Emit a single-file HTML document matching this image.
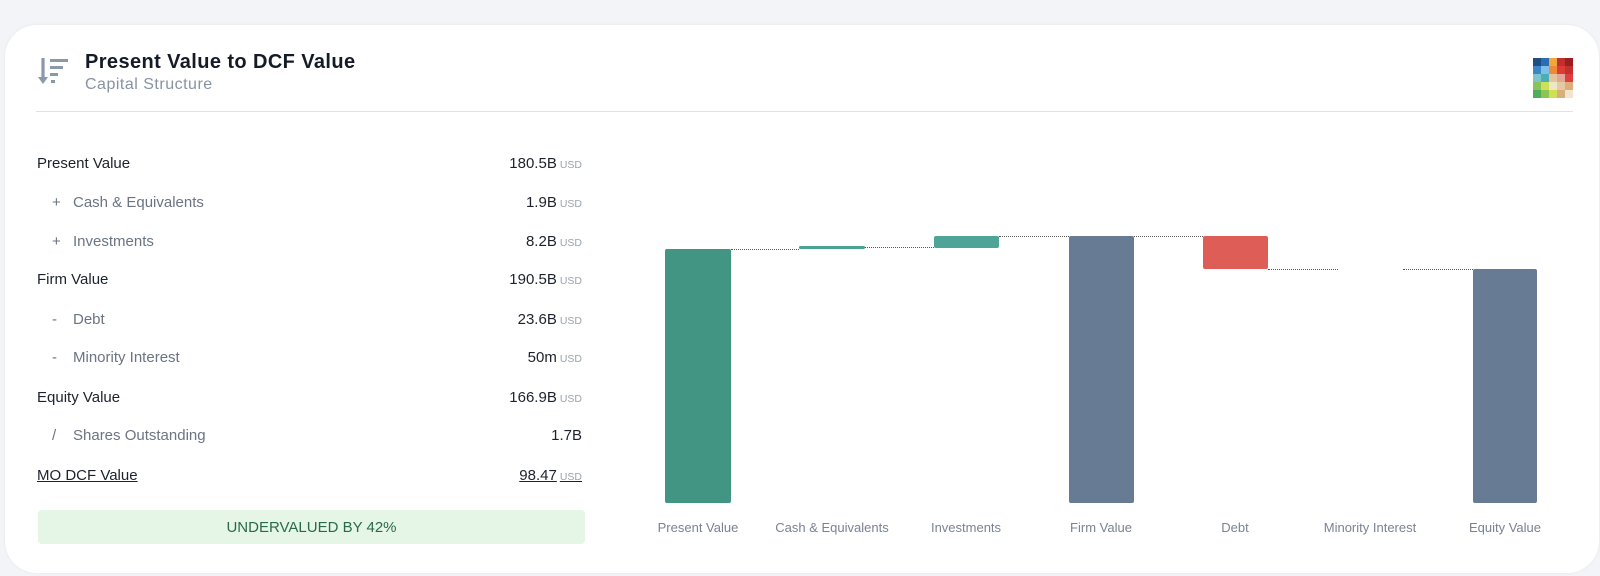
<!DOCTYPE html>
<html><head><meta charset="utf-8"><style>
*{margin:0;padding:0;box-sizing:border-box}
body{width:1600px;height:576px;background:#f3f4f8;font-family:"Liberation Sans",sans-serif;position:relative;overflow:hidden}
.card{position:absolute;left:5px;top:25px;width:1594px;height:548px;background:#fff;border-radius:32px;box-shadow:0 0 3px rgba(0,0,0,.06)}
.abs{position:absolute}
.title{left:85px;top:51px;font-size:20px;font-weight:bold;color:#141a26;letter-spacing:.4px}
.sub{left:85px;top:76px;font-size:16px;color:#8792a4;letter-spacing:.5px}
.sep{left:36px;top:111px;width:1537px;height:1px;background:#dfe2e6}
.row{position:absolute;left:37px;width:545px;height:20px;font-size:15px;color:#1c222c;line-height:20px}
.row .v{position:absolute;right:0;top:0}
.row .u{font-size:10.5px;color:#9aa3ae;margin-left:3px}
.row.s{color:#6b7482}
.row.s .l{padding-left:15px}
.row.s .l b{font-weight:normal;display:inline-block;width:21px}
.btn{left:38px;top:510px;width:547px;height:34px;background:#e5f6e6;border-radius:4px;color:#2a6a4a;font-size:15px;text-align:center;line-height:36px}
.bar{position:absolute;border-radius:2px}
.dot{position:absolute;height:0;border-top:1.5px dotted #555}
.lab{position:absolute;top:520px;width:160px;text-align:center;font-size:13px;color:#7a8392}
</style></head><body>
<div class="card"></div>
<svg class="abs" style="left:38px;top:56px" width="32" height="32" viewBox="0 0 32 32">
<path d="M5 2v22" stroke="#8a98ab" stroke-width="3.2"/>
<path d="M0 21l5 7 5-7z" fill="#8a98ab"/>
<rect x="12" y="3" width="18" height="3" fill="#8a98ab"/>
<rect x="12" y="10" width="13" height="3" fill="#8a98ab"/>
<rect x="12" y="17" width="8" height="3" fill="#8a98ab"/>
<rect x="13" y="24" width="4" height="3" fill="#8a98ab"/>
</svg>
<div class="abs title">Present Value to DCF Value</div>
<div class="abs sub">Capital Structure</div>
<div class="abs sep"></div>
<svg class="abs" style="left:1533px;top:58px" width="40" height="40" viewBox="0 0 40 40">
<rect x="0" y="0" width="8" height="8" fill="#1f4e85"/><rect x="8" y="0" width="8" height="8" fill="#2a6db3"/><rect x="16" y="0" width="8" height="8" fill="#f0a73c"/><rect x="24" y="0" width="8" height="8" fill="#c03030"/><rect x="32" y="0" width="8" height="8" fill="#9b1f1f"/>
<rect x="0" y="8" width="8" height="8" fill="#3a86c6"/><rect x="8" y="8" width="8" height="8" fill="#7cbfe8"/><rect x="16" y="8" width="8" height="8" fill="#ec8a3a"/><rect x="24" y="8" width="8" height="8" fill="#e03a35"/><rect x="32" y="8" width="8" height="8" fill="#c2302f"/>
<rect x="0" y="16" width="8" height="8" fill="#7cc5cf"/><rect x="8" y="16" width="8" height="8" fill="#4aaeb6"/><rect x="16" y="16" width="8" height="8" fill="#e3c49c"/><rect x="24" y="16" width="8" height="8" fill="#e3a596"/><rect x="32" y="16" width="8" height="8" fill="#e23d3d"/>
<rect x="0" y="24" width="8" height="8" fill="#8cc25a"/><rect x="8" y="24" width="8" height="8" fill="#cde05a"/><rect x="16" y="24" width="8" height="8" fill="#efe6c4"/><rect x="24" y="24" width="8" height="8" fill="#e6c8a2"/><rect x="32" y="24" width="8" height="8" fill="#dcae7c"/>
<rect x="0" y="32" width="8" height="8" fill="#4fae5a"/><rect x="8" y="32" width="8" height="8" fill="#8ec454"/><rect x="16" y="32" width="8" height="8" fill="#cfe052"/><rect x="24" y="32" width="8" height="8" fill="#d8ae7c"/><rect x="32" y="32" width="8" height="8" fill="#f1e5cc"/>
</svg>

<div class="row" style="top:154px"><span class="l">Present Value</span><span class="v">180.5B<span class="u">USD</span></span></div>
<div class="row s" style="top:193px"><span class="l"><b>+</b>Cash &amp; Equivalents</span><span class="v" style="color:#1c222c">1.9B<span class="u">USD</span></span></div>
<div class="row s" style="top:232px"><span class="l"><b>+</b>Investments</span><span class="v" style="color:#1c222c">8.2B<span class="u">USD</span></span></div>
<div class="row" style="top:270px"><span class="l">Firm Value</span><span class="v">190.5B<span class="u">USD</span></span></div>
<div class="row s" style="top:310px"><span class="l"><b>-</b>Debt</span><span class="v" style="color:#1c222c">23.6B<span class="u">USD</span></span></div>
<div class="row s" style="top:348px"><span class="l"><b>-</b>Minority Interest</span><span class="v" style="color:#1c222c">50m<span class="u">USD</span></span></div>
<div class="row" style="top:388px"><span class="l">Equity Value</span><span class="v">166.9B<span class="u">USD</span></span></div>
<div class="row s" style="top:426px"><span class="l"><b>/</b>Shares Outstanding</span><span class="v" style="color:#1c222c">1.7B</span></div>
<div class="row" style="top:466px"><span class="l" style="text-decoration:underline">MO DCF Value</span><span class="v" style="text-decoration:underline">98.47<span class="u">USD</span></span></div>
<div class="abs btn">UNDERVALUED BY 42%</div>

<div class="bar" style="left:665px;top:249px;width:66px;height:254px;background:#439583"></div>
<div class="bar" style="left:799px;top:246px;width:66px;height:3px;background:#4aa292"></div>
<div class="bar" style="left:934px;top:236px;width:65px;height:12px;background:#4ea597"></div>
<div class="bar" style="left:1069px;top:236px;width:65px;height:267px;background:#677c94"></div>
<div class="bar" style="left:1203px;top:236px;width:65px;height:33px;background:#df5d57"></div>
<div class="bar" style="left:1473px;top:269px;width:64px;height:234px;background:#677c94"></div>
<div class="dot" style="left:731px;top:249px;width:68px"></div>
<div class="dot" style="left:865px;top:247px;width:69px"></div>
<div class="dot" style="left:999px;top:236px;width:70px"></div>
<div class="dot" style="left:1134px;top:236px;width:69px"></div>
<div class="dot" style="left:1268px;top:269px;width:70px"></div>
<div class="dot" style="left:1403px;top:269px;width:70px"></div>
<div class="lab" style="left:618px">Present Value</div>
<div class="lab" style="left:752px">Cash &amp; Equivalents</div>
<div class="lab" style="left:886px">Investments</div>
<div class="lab" style="left:1021px">Firm Value</div>
<div class="lab" style="left:1155px">Debt</div>
<div class="lab" style="left:1290px">Minority Interest</div>
<div class="lab" style="left:1425px">Equity Value</div>
</body></html>
